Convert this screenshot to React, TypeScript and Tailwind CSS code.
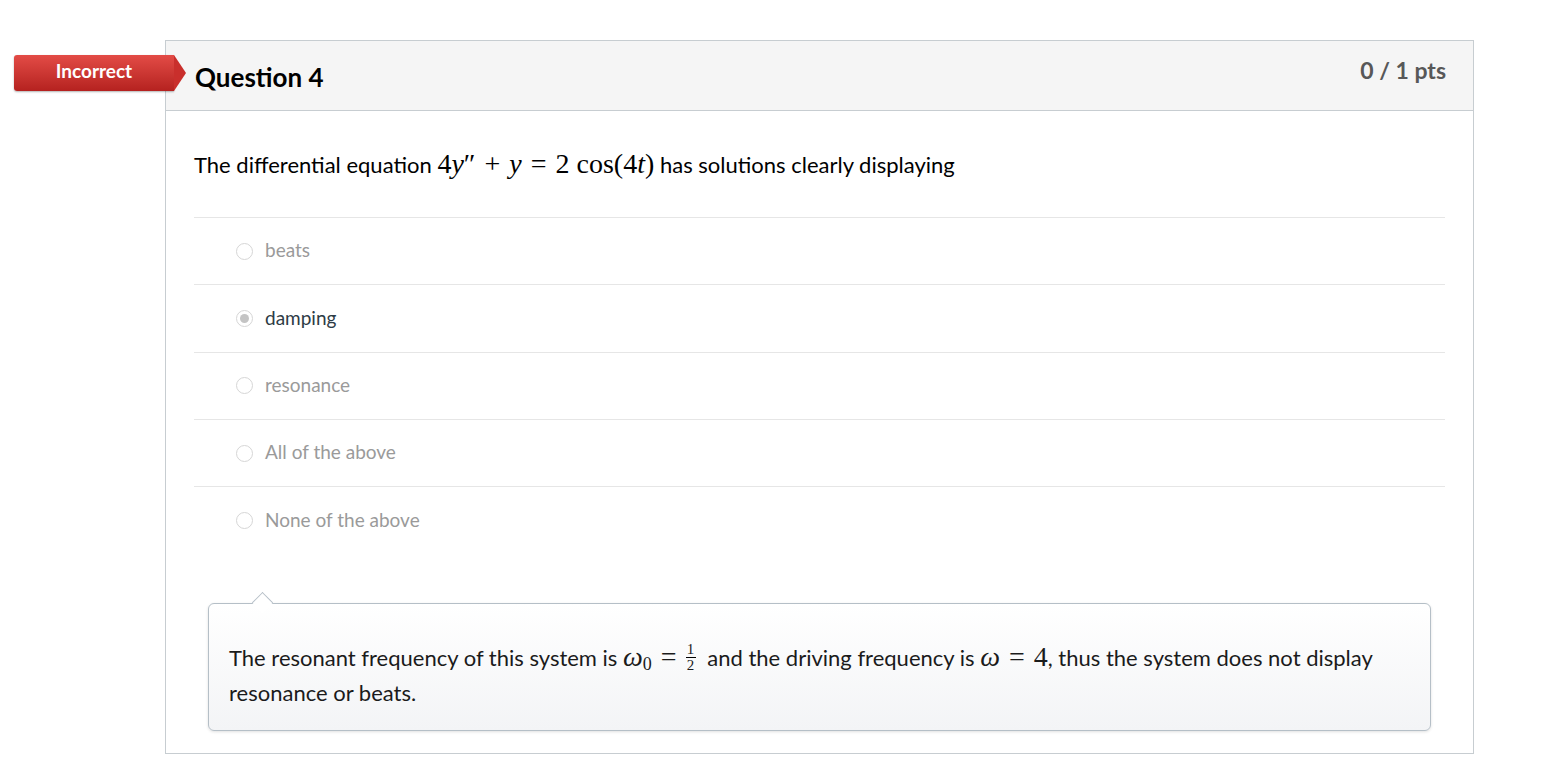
import React from 'react'

const mathFont = { fontFamily: '"Liberation Serif", "DejaVu Serif", serif' }

function M({ children, i, cls = '' }: { children: React.ReactNode; i?: boolean; cls?: string }) {
  return (
    <span className={`text-[28px] leading-none ${i ? 'italic' : ''} ${cls}`} style={mathFont}>
      {children}
    </span>
  )
}

function Op({ children }: { children: React.ReactNode }) {
  return (
    <span className="text-[28px] leading-none mx-[9px]" style={mathFont}>
      {children}
    </span>
  )
}

function Radio({ checked }: { checked?: boolean }) {
  return (
    <span className="w-[17px] h-[17px] rounded-full border border-[#d6d6d6] bg-white flex items-center justify-center shrink-0">
      {checked && <span className="w-[9px] h-[9px] rounded-full bg-[#c4c4c4]" />}
    </span>
  )
}

const answers = [
  { label: 'beats' },
  { label: 'damping', checked: true },
  { label: 'resonance' },
  { label: 'All of the above' },
  { label: 'None of the above' },
]

export default function App() {
  return (
    <div className="w-[1561px] h-[768px] bg-white pt-[40px]" style={{ fontFamily: 'Lato, "Open Sans", sans-serif' }}>
      <div className="relative ml-[165px] w-[1309px] h-[714px] border border-[#c7cdd1]">
        {/* Incorrect badge */}
        <div className="absolute left-[-152px] top-[14px] flex items-center">
          <div className="w-[160px] h-[36px] rounded-l-[3px] bg-gradient-to-b from-[#e34b46] to-[#b5211f] shadow-[0_1px_2px_rgba(0,0,0,0.3)] flex items-center justify-center text-white font-bold text-[19px] pb-[3px]">
            Incorrect
          </div>
          <div className="w-0 h-0 border-y-[18px] border-y-transparent border-l-[12px] border-l-[#c92f2c]" />
        </div>

        {/* Header */}
        <div className="h-[70px] bg-[#f5f5f5] border-b border-[#c7cdd1] flex justify-between pl-[29px] pr-[27px]">
          <h2 className="text-[26px] font-bold text-black pt-[18px] leading-[36px]">Question 4</h2>
          <div className="text-[23px] font-bold text-[#585858] pt-[13px] leading-[32px]">0 / 1 pts</div>
        </div>

        <div className="px-[28px]">
          <p className="text-[22px] text-black mt-[39px] leading-[30px] h-[30px] whitespace-nowrap">
            The differential equation{' '}
            <M>4</M><M i>y</M><M>″</M><Op>+</Op><M i>y</M><Op>=</Op><M>2 cos(4</M><M i>t</M><M>)</M>{' '}
            has solutions clearly displaying
          </p>

          <div className="mt-[37px]">
            {answers.map((a) => (
              <div key={a.label} className="h-[67.3px] border-t border-[#e6e6e6] flex items-center pl-[42px] gap-[12px]">
                <Radio checked={a.checked} />
                <span className={`text-[19px] pb-[1px] ${a.checked ? 'text-[#2d3b45]' : 'text-[#9a9a9a]'}`}>{a.label}</span>
              </div>
            ))}
          </div>

          {/* Feedback */}
          <div className="relative ml-[14px] mr-[14px] mt-[50px]">
            <div className="absolute left-[47px] top-[-8px] w-[15px] h-[15px] rotate-45 border-l border-t border-[#b5bfc7] bg-white" />
            <div className="rounded-[6px] border border-[#b5bfc7] bg-gradient-to-b from-white to-[#f3f4f6] shadow-[0_1px_3px_rgba(0,0,0,0.12)] h-[128px] px-[20px] pt-[36px] text-[22px] text-[#1b1b1b] leading-[35px] whitespace-nowrap">
              The resonant frequency of this system is <M i>ω</M>
              <span className="text-[18px] leading-none relative top-[4px]" style={mathFont}>0</span>
              <Op>=</Op>
              <span className="inline-flex flex-col items-center align-middle text-[15px] leading-[13px] mr-[6px] relative top-[-3px]" style={mathFont}>
                <span>1</span>
                <span className="w-[10px] border-t border-black my-[1px]" />
                <span>2</span>
              </span>{' '}
              and the driving frequency is <M i>ω</M><Op>=</Op><M>4</M>, thus the system does not display
              <br />
              resonance or beats.
            </div>
          </div>
        </div>
      </div>
    </div>
  )
}
